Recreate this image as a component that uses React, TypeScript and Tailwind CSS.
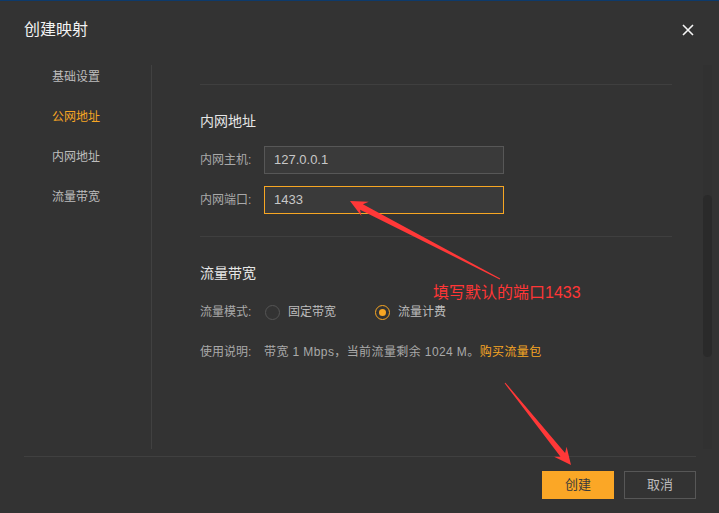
import React from "react";

const navItems = ["基础设置", "公网地址", "内网地址", "流量带宽"];

function Radio({ checked }: { checked?: boolean }) {
  return checked ? (
    <span className="flex h-[15px] w-[15px] items-center justify-center rounded-full border-[1.5px] border-[#f7a623]">
      <span className="h-[7px] w-[7px] rounded-full bg-[#f7a623]" />
    </span>
  ) : (
    <span className="h-[15px] w-[15px] rounded-full border-[1.5px] border-[#555]" />
  );
}

export default function App() {
  return (
    <div className="relative flex h-[513px] w-[719px] flex-col overflow-hidden border-t border-[#0d3a6b] bg-[#333333] font-['Liberation_Sans','Noto_Sans_CJK_SC',sans-serif] text-[12px] text-[#bdbdbd]">
      {/* Header */}
      <div className="flex h-[64px] shrink-0 items-start justify-between pl-6 pr-[25px] pt-[18px]">
        <h1 className="text-[16px] leading-[22px] text-[#f2f2f2]">创建映射</h1>
        <svg width="12" height="12" viewBox="0 0 12 12" className="mt-[5px]">
          <path d="M1 1L11 11M11 1L1 11" stroke="#f5f5f5" strokeWidth="1.6" />
        </svg>
      </div>

      {/* Body */}
      <div className="flex h-[384px] shrink-0">
        <nav className="flex w-[152px] shrink-0 flex-col gap-5 border-r border-[#414141] pl-[52px] pt-[2px]">
          {navItems.map((item) => (
            <div
              key={item}
              className={`h-5 leading-5 ${item === "公网地址" ? "text-[#f7a623]" : "text-[#bdbdbd]"}`}
            >
              {item}
            </div>
          ))}
        </nav>

        <div className="flex-1 pl-12 pr-[31px]">
          <div className="mt-[19px] border-t border-[#3f3f3f]" />

          <h2 className="mt-[26px] text-[14px] leading-5 text-[#e6e6e6]">内网地址</h2>

          <div className="mt-[15px] flex items-center">
            <span className="w-16 text-[#a9a9a9]">内网主机:</span>
            <div className="flex h-[28px] w-[240px] items-center border border-[#575757] bg-[#3a3a3a] pl-[9px] text-[13px] text-[#c8c8c8]">
              127.0.0.1
            </div>
          </div>
          <div className="mt-3 flex items-center">
            <span className="w-16 text-[#a9a9a9]">内网端口:</span>
            <div className="flex h-[28px] w-[240px] items-center border border-[#f7a623] bg-[#3a3a3a] pl-[9px] text-[13px] text-[#c8c8c8]">
              1433
            </div>
          </div>

          <div className="mt-[22px] border-t border-[#3f3f3f]" />

          <h2 className="mt-[26px] text-[14px] leading-5 text-[#e6e6e6]">流量带宽</h2>

          <div className="mt-[19px] flex h-5 items-center">
            <span className="w-16 text-[#a9a9a9]">流量模式:</span>
            <label className="flex w-[111px] items-center gap-2 pl-px">
              <Radio />
              <span className="text-[#bdbdbd]">固定带宽</span>
            </label>
            <label className="flex items-center gap-2">
              <Radio checked />
              <span className="text-[#bdbdbd]">流量计费</span>
            </label>
          </div>

          <div className="mt-5 flex h-5 items-center">
            <span className="w-16 text-[#a9a9a9]">使用说明:</span>
            <span className="tracking-[0.4px] text-[#a9a9a9]">带宽 1 Mbps，当前流量剩余 1024 M。</span>
            <span className="tracking-[0.4px] text-[#f7a623]">购买流量包</span>
          </div>
        </div>

        {/* Scrollbar */}
        <div className="mr-[7px] w-[9px] shrink-0 bg-[#313131]">
          <div className="mt-[130px] h-[162px] rounded-full bg-[#2a2a2a]" />
        </div>
      </div>

      {/* Footer */}
      <div className="ml-6 mr-[23px] mt-[7px] flex justify-end gap-[10px] border-t border-[#404040] pt-[14px]">
        <button className="h-[28px] w-[72px] bg-[#fba726] text-[13px] text-[#3a3a3a]">创建</button>
        <button className="h-[28px] w-[72px] border border-[#575757] text-[13px] text-[#bdbdbd]">取消</button>
      </div>

      {/* Annotation */}
      <span className="absolute left-[433px] top-[282px] text-[16px] leading-5 text-[#ff3636]">填写默认的端口1433</span>
      <svg className="pointer-events-none absolute left-0 top-0" width="719" height="513" viewBox="0 0 719 513">
        <polygon
          fill="#ff3838"
          points="500.2,277.6 362.9,203.3 368.8,200.7 350,200 361.4,214.9 360.1,208.7 499.8,278.4"
        />
        <polygon
          fill="#ff3838"
          points="505.4,381.7 565.1,452.0 566.6,445.8 571,464 554.1,455.8 560.5,455.8 504.6,382.3"
        />
      </svg>
    </div>
  );
}
